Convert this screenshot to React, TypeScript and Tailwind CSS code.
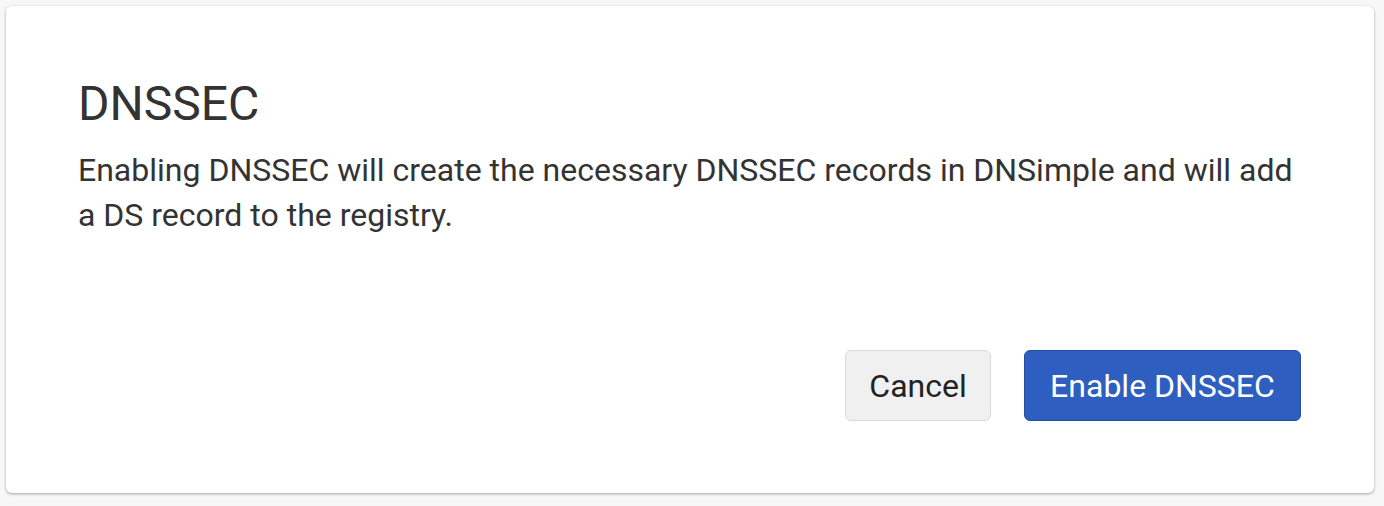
import React from "react";

export default function App() {
  return (
    <div className="w-[1384px] h-[506px] bg-[#f7f7f7] pt-[6px] pl-[6px]" style={{ fontFamily: "Roboto, 'Liberation Sans', sans-serif" }}>
      <div className="w-[1368px] h-[487px] bg-white rounded-[6px] shadow-[0_1px_3px_rgba(0,0,0,0.35)] px-[72px] pt-[66px] flex flex-col">
        <h1 className="text-[48px] leading-[64px] text-[#333333] font-normal">DNSSEC</h1>
        <p className="mt-[12px] text-[32px] leading-[45px] text-[#333333]">
          Enabling DNSSEC will create the necessary DNSSEC records in DNSimple and will add a DS record to the registry.
        </p>
        <div className="mt-auto mb-[72px] flex justify-end gap-[33px] pr-[1px]">
          <button className="h-[71px] w-[146px] rounded-[6px] bg-[#f0f0f0] border border-[#d9d9d9] text-[32px] text-[#222222]">
            Cancel
          </button>
          <button className="h-[71px] w-[277px] rounded-[6px] bg-[#2e5ebf] border border-[#254fa3] text-[32px] text-white">
            Enable DNSSEC
          </button>
        </div>
      </div>
    </div>
  );
}
